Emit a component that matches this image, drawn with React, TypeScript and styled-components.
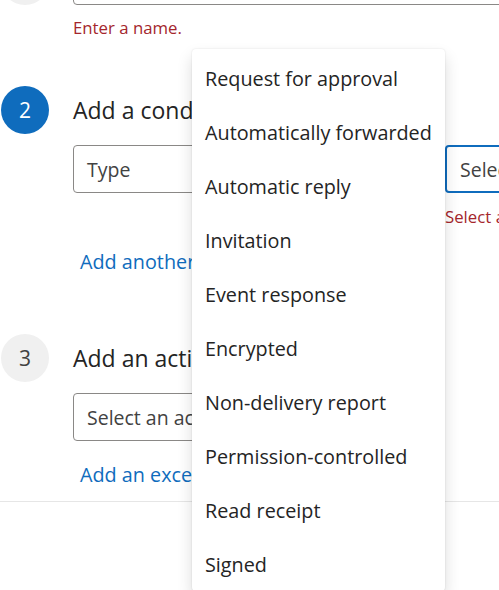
import React from "react"
import styled, { createGlobalStyle } from "styled-components"

const GlobalStyle = createGlobalStyle`
  html, body {
    margin: 0;
    padding: 0;
    background: #fff;
    overflow: hidden;
  }
  body {
    font-family: "Open Sans", "Noto Sans", sans-serif;
    color: #242424;
  }
`

const menuItems = [
  "Request for approval",
  "Automatically forwarded",
  "Automatic reply",
  "Invitation",
  "Event response",
  "Encrypted",
  "Non-delivery report",
  "Permission-controlled",
  "Read receipt",
  "Signed",
]

export default function App() {
  return (
    <>
      <GlobalStyle />
      <S.Page>
        <S.Steps>
          <S.Step>
            <S.Circle>1</S.Circle>
            <S.Body>
              <S.Field $width={520}>Name your rule</S.Field>
              <S.Error>Enter a name.</S.Error>
            </S.Body>
          </S.Step>

          <S.Step $gap={47}>
            <S.Circle $active>2</S.Circle>
            <S.Body>
              <S.Heading>Add a condition</S.Heading>
              <S.Row>
                <S.Field $width={360}>Type</S.Field>
                <S.Column>
                  <S.Field $width={200} $focused>Select a value</S.Field>
                  <S.Error $top={13}>Select a value.</S.Error>
                </S.Column>
              </S.Row>
              <S.Link>Add another condition</S.Link>
            </S.Body>
          </S.Step>

          <S.Step $gap={58}>
            <S.Circle>3</S.Circle>
            <S.Body>
              <S.Heading>Add an action</S.Heading>
              <S.Row>
                <S.Field $width={360}>Select an action</S.Field>
              </S.Row>
              <S.Link>Add an exception</S.Link>
            </S.Body>
          </S.Step>
        </S.Steps>

        <S.Menu>
          {menuItems.map((item) => (
            <S.MenuItem key={item}>{item}</S.MenuItem>
          ))}
        </S.Menu>
      </S.Page>
    </>
  )
}

const S = {
  Page: styled.div`
    position: relative;
    width: 499px;
    height: 590px;
    overflow: hidden;
  `,
  Steps: styled.div`
    margin-top: -43px;
    padding-left: 1px;
    padding-bottom: 12px;
    border-bottom: 1px solid #e6e6e6;
  `,
  Step: styled.div<{ $gap?: number }>`
    display: grid;
    grid-template-columns: 48px 1fr;
    column-gap: 24px;
    margin-top: ${(p) => p.$gap ?? 0}px;
  `,
  Circle: styled.div<{ $active?: boolean }>`
    width: 48px;
    height: 48px;
    border-radius: 50%;
    display: flex;
    align-items: center;
    justify-content: center;
    font-size: 21px;
    background: ${(p) => (p.$active ? "#0f6cbd" : "#f0f0f0")};
    color: ${(p) => (p.$active ? "#fff" : "#424242")};
  `,
  Body: styled.div`
    display: flex;
    flex-direction: column;
    align-items: flex-start;
    min-width: 0;
  `,
  Heading: styled.div`
    height: 48px;
    display: flex;
    align-items: center;
    font-size: 23px;
    white-space: nowrap;
    margin-bottom: 11px;
  `,
  Row: styled.div`
    display: flex;
    align-items: flex-start;
    gap: 12px;
  `,
  Column: styled.div`
    display: flex;
    flex-direction: column;
  `,
  Field: styled.div<{ $width: number; $focused?: boolean }>`
    box-sizing: border-box;
    width: ${(p) => p.$width}px;
    height: 48px;
    flex-shrink: 0;
    display: flex;
    align-items: center;
    padding-left: 13px;
    border: ${(p) => (p.$focused ? "2px solid #0f6cbd" : "1px solid #8a8886")};
    border-radius: 4px;
    font-size: 19.5px;
    color: #424242;
    white-space: nowrap;
    overflow: hidden;
  `,
  Error: styled.div<{ $top?: number }>`
    margin-top: ${(p) => p.$top ?? 12}px;
    font-size: 16.8px;
    line-height: 22px;
    color: #a4262c;
    white-space: nowrap;
  `,
  Link: styled.div`
    margin-top: 20px;
    margin-left: 7px;
    font-size: 19.8px;
    line-height: 28px;
    color: #0f6cbd;
    white-space: nowrap;
  `,
  Menu: styled.div`
    position: absolute;
    left: 192px;
    top: 49px;
    width: 253px;
    padding-top: 2px;
    background: #fff;
    border-radius: 4px;
    box-shadow: 0 0 2px rgba(0, 0, 0, 0.12), 0 8px 16px rgba(0, 0, 0, 0.14);
  `,
  MenuItem: styled.div`
    height: 54px;
    display: flex;
    align-items: center;
    padding-left: 13px;
    font-size: 19.8px;
    color: #242424;
    white-space: nowrap;
  `,
}
